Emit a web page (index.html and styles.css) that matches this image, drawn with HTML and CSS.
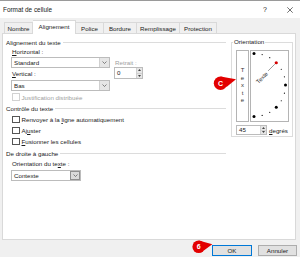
FILE: index.html
```html
<!DOCTYPE html>
<html lang="fr">
<head>
<meta charset="utf-8">
<title>Format de cellule</title>
<link rel="stylesheet" href="styles.css">
</head>
<body>
<div class="win">
  <div class="titlebar">
    <span class="title">Format de cellule</span>
    <span class="help">?</span>
    <svg class="close" width="6" height="6" viewBox="0 0 6 6"><path d="M0.3 0.3L5.7 5.7M5.7 0.3L0.3 5.7" stroke="#333" stroke-width="0.7" fill="none"/></svg>
  </div>
  <div class="tabs">
    <div class="tab first">Nombre</div>
    <div class="tab sel">Alignement</div>
    <div class="tab">Police</div>
    <div class="tab">Bordure</div>
    <div class="tab">Remplissage</div>
    <div class="tab">Protection</div>
  </div>
  <div class="panel">
    <div class="left">
      <div class="heading">Alignement du texte</div>
      <div class="align">
        <div class="col1">
          <div class="lbl"><u>H</u>orizontal :</div>
          <div class="combo mt"><span class="val">Standard</span><span class="drop"><svg width="5" height="3" viewBox="0 0 5 3"><polyline points="0.5,0.5 2.5,2.5 4.5,0.5" stroke="#555" stroke-width="0.7" fill="none"/></svg></span></div>
          <div class="lbl tall"><u>V</u>ertical :</div>
          <div class="combo"><span class="val">Bas</span><span class="drop"><svg width="5" height="3" viewBox="0 0 5 3"><polyline points="0.5,0.5 2.5,2.5 4.5,0.5" stroke="#555" stroke-width="0.7" fill="none"/></svg></span></div>
        </div>
        <div class="col2">
          <div class="lbl dis">Retrait :</div>
          <div class="spin"><span class="val">0</span><span class="arrows"><span><svg width="3" height="2" viewBox="0 0 3 2"><polygon points="0,2 1.5,0 3,2" fill="#444"/></svg></span><span><svg width="3" height="2" viewBox="0 0 3 2"><polygon points="0,0 1.5,2 3,0" fill="#444"/></svg></span></span></div>
        </div>
      </div>
      <div class="check dis"><span class="box"></span><span>Justification distribuée</span></div>
      <div class="heading">Contrôle du texte</div>
      <div class="check"><span class="box"></span><span>Renvoyer à la <u>l</u>igne automatiquement</span></div>
      <div class="check"><span class="box"></span><span>Aj<u>u</u>ster</span></div>
      <div class="check"><span class="box"></span><span><u>F</u>usionner les cellules</span></div>
      <div class="heading">De droite à gauche</div>
      <div class="ctx-label">Orientation du te<u>x</u>te :</div>
      <div class="combo ctx"><span class="val">Contexte</span><span class="drop"><svg width="5" height="3" viewBox="0 0 5 3"><polyline points="0.5,0.5 2.5,2.5 4.5,0.5" stroke="#555" stroke-width="0.7" fill="none"/></svg></span></div>
    </div>
    <div class="right">
      <fieldset class="orient">
        <legend>Orientation</legend>
        <div class="orient-row">
          <div class="vtext"><span>T</span><span>e</span><span>x</span><span>t</span><span>e</span></div>
          <div class="dial">
            <svg width="37" height="70" viewBox="0 0 37 70">
              <circle cx="3" cy="2.5" r="1.5" fill="#000"/>
              <circle cx="11.15" cy="3.57" r="0.6" fill="#000"/>
              <circle cx="18.75" cy="6.72" r="0.6" fill="#000"/>
              <circle cx="30.28" cy="18.25" r="0.6" fill="#000"/>
              <circle cx="33.43" cy="25.85" r="0.6" fill="#000"/>
              <circle cx="34.5" cy="34" r="1.5" fill="#000"/>
              <circle cx="33.43" cy="42.15" r="0.6" fill="#000"/>
              <circle cx="30.28" cy="49.75" r="0.6" fill="#000"/>
              <circle cx="25.27" cy="56.27" r="1.5" fill="#000"/>
              <circle cx="18.75" cy="61.28" r="0.6" fill="#000"/>
              <circle cx="11.15" cy="64.43" r="0.6" fill="#000"/>
              <circle cx="3" cy="65.5" r="1.5" fill="#000"/>
              <line x1="17.1" y1="19.9" x2="23.8" y2="13.2" stroke="#555" stroke-width="0.6"/>
              <circle cx="25.27" cy="11.73" r="1.6" fill="#d40000"/>
              <text x="7" y="36.5" transform="rotate(-45 3 34)" class="dial-text">Texte</text>
            </svg>
          </div>
        </div>
        <div class="deg-row">
          <div class="spin deg"><span class="val">45</span><span class="arrows"><span><svg width="3" height="2" viewBox="0 0 3 2"><polygon points="0,2 1.5,0 3,2" fill="#444"/></svg></span><span><svg width="3" height="2" viewBox="0 0 3 2"><polygon points="0,0 1.5,2 3,0" fill="#444"/></svg></span></span></div>
          <span><u>d</u>egrés</span>
        </div>
      </fieldset>
    </div>
  </div>
  <div class="footer">
    <button class="btn ok">OK</button>
    <button class="btn cancel">Annuler</button>
  </div>
  <svg class="badge badge-c" width="26" height="17" viewBox="0 0 26 17">
    <polygon points="8.5,1.6 24,4.3 14.5,12" fill="#e30000"/>
    <circle cx="8.5" cy="8.3" r="6.7" fill="#e30000"/>
    <text x="8.5" y="10.8" class="badge-text">C</text>
  </svg>
  <svg class="badge badge-6" width="23" height="14" viewBox="0 0 23 14">
    <polygon points="7.7,1.4 21.3,5.3 12.5,11.8" fill="#e30000"/>
    <circle cx="7.7" cy="7.7" r="6.3" fill="#e30000"/>
    <text x="7.7" y="10.2" class="badge-text">6</text>
  </svg>
</div>
</body>
</html>
```

FILE: styles.css
```css
* { box-sizing: border-box; }
html, body { margin: 0; padding: 0; }
body {
  width: 300px;
  height: 257px;
  overflow: hidden;
  font-family: "Liberation Sans", Arial, sans-serif;
  font-size: 6.2px;
  color: #1a1a1a;
}
u { text-decoration-thickness: 0.5px; text-underline-offset: 0.8px; }

.win {
  position: relative;
  width: 300px;
  height: 257px;
  background: #f0f0f0;
  border-top: 1px solid #9a9a9a;
}

.titlebar {
  height: 17px;
  background: #fff;
  display: flex;
  align-items: center;
  padding-left: 3px;
  padding-right: 7px;
}
.title { flex: 1; font-size: 6.4px; }
.help { margin-right: 20px; font-size: 7px; }
.close { display: block; }

.tabs {
  height: 15px;
  display: grid;
  grid-template-columns: 29px 43px 28px 33px 43px 37px;
  align-items: end;
  padding-left: 4px;
  position: relative;
  z-index: 1;
}
.tab {
  height: 11px;
  border-top: 1px solid #d9d9d9;
  border-right: 1px solid #d9d9d9;
  display: flex;
  align-items: center;
  justify-content: center;
  background: #f0f0f0;
}
.tab.first { border-left: 1px solid #d9d9d9; }
.tab.sel {
  height: 14px;
  margin-bottom: -1px;
  background: #fff;
  padding-bottom: 2px;
}

.panel {
  height: 207px;
  margin: 0 4px 0 2px;
  background: #fff;
  border: 1px solid #d9d9d9;
  display: flex;
}

.left { width: 223px; padding: 2px 0 0 3px; }
.heading {
  height: 12px;
  display: flex;
  align-items: center;
  gap: 2px;
}
.heading::after {
  content: "";
  flex: 1;
  height: 1px;
  background: #dcdcdc;
}

.align {
  display: grid;
  grid-template-columns: 99px 29px;
  column-gap: 4px;
  margin-left: 5px;
}
.col1, .col2 { display: flex; flex-direction: column; }
.col2 { padding-top: 11px; }
.lbl { height: 8px; line-height: 8px; padding-left: 1px; }
.lbl.tall { height: 12px; line-height: 12px; }
.lbl.dis { color: #a0a0a0; }

.combo {
  height: 11px;
  border: 1px solid #bcbcbc;
  display: flex;
  background: #fff;
}
.combo.mt { margin-top: 1px; }
.combo .val { flex: 1; padding-left: 2px; line-height: 9px; }
.combo .drop {
  width: 10px;
  background: #e6e6e6;
  border-left: 1px solid #d0d0d0;
  display: flex;
  align-items: center;
  justify-content: center;
}
.combo.ctx { width: 70px; margin: 1px 0 0 5px; }
.combo.ctx .drop { background: #dadada; border: 1px solid #8f8f8f; }

.spin {
  height: 12px;
  border: 1px solid #bcbcbc;
  display: flex;
  background: #fff;
}
.spin .val { flex: 1; padding-left: 2px; line-height: 10px; }
.spin .arrows {
  width: 6px;
  display: flex;
  flex-direction: column;
  border-left: 1px solid #d0d0d0;
  background: #e6e6e6;
}
.arrows span {
  flex: 1;
  display: flex;
  align-items: center;
  justify-content: center;
}
.arrows span + span { border-top: 1px solid #d0d0d0; }
.arrows svg { display: block; }

.check {
  height: 11px;
  display: flex;
  align-items: center;
  gap: 2px;
  padding-left: 6px;
}
.box {
  width: 7.5px;
  height: 7.5px;
  border: 1px solid #555;
  background: #fff;
}
.check.dis { color: #a0a0a0; height: 10px; margin-top: 1px; }
.check.dis .box { border-color: #d2d2d2; }

.ctx-label { height: 10px; line-height: 10px; padding-left: 6px; }

.right { flex: 1; }
.orient {
  margin: 4px 0 0 5px;
  width: 62px;
  min-width: 0;
  padding: 4px 3px 1px 4px;
  border: 1px solid #dcdcdc;
}
.orient legend {
  padding: 0 1px;
  margin-left: -3px;
  line-height: 8px;
  height: 8px;
}
.orient-row { display: flex; gap: 1px; height: 72px; }
.vtext {
  width: 13px;
  border: 1px solid #b4b4b4;
  display: flex;
  flex-direction: column;
  align-items: center;
  justify-content: center;
  color: #333;
  font-size: 6px;
}
.vtext span { height: 7.5px; line-height: 7.5px; }
.dial { width: 39px; border: 1px solid #b4b4b4; }
.dial svg { display: block; }
.dial-text {
  font-family: "Liberation Sans", Arial, sans-serif;
  font-size: 5.8px;
  fill: #333;
}

.deg-row {
  display: flex;
  align-items: center;
  gap: 2px;
  margin-top: 3px;
  height: 10px;
}
.spin.deg { width: 31px; height: 10px; }
.spin.deg .val { line-height: 8px; }

.footer {
  display: flex;
  justify-content: flex-end;
  gap: 6px;
  padding: 5px 3px 0 0;
}
.btn {
  height: 11px;
  width: 40px;
  padding: 0;
  font: inherit;
  line-height: 9px;
  color: #1a1a1a;
  background: #e1e1e1;
  border: 1px solid #adadad;
}
.btn.ok { border-color: #0078d7; }
.btn.cancel { width: 39px; }

.badge { position: absolute; display: block; }
.badge-c { left: 212px; top: 74px; }
.badge-6 { left: 191px; top: 238px; }
.badge-text {
  font-family: "Liberation Sans", Arial, sans-serif;
  font-size: 7px;
  font-weight: bold;
  fill: #fff;
  text-anchor: middle;
}
```
